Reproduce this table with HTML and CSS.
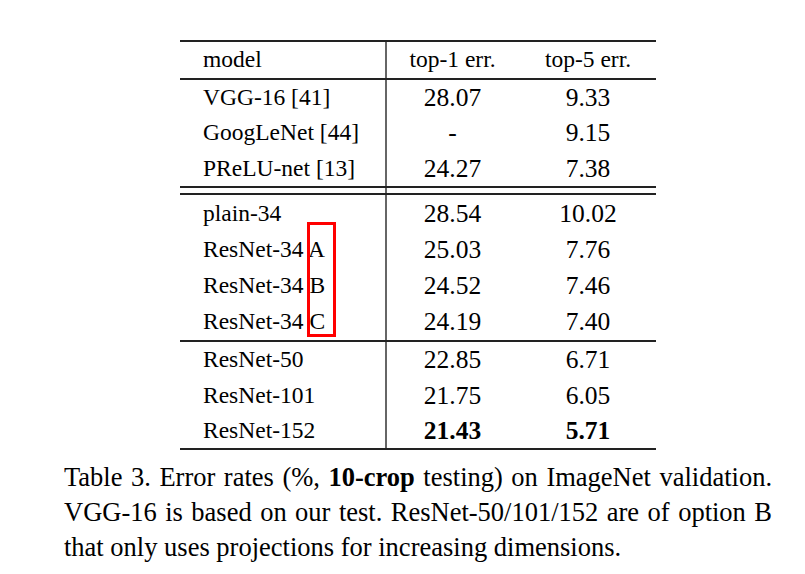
FILE: index.html
```html
<!DOCTYPE html>
<html lang="en">
<head>
    <meta charset="UTF-8">
    <title>Table 3 - Error rates on ImageNet validation</title>
    <link rel="stylesheet" href="styles.css">
</head>
<body>
    <div class="page">
        <div class="results">
            <div class="group head">
                <div class="row">
                    <div class="cell name">model</div>
                    <div class="cell">top-1 err.</div>
                    <div class="cell">top-5 err.</div>
                </div>
            </div>

            <div class="group short before-double">
                <div class="row">
                    <div class="cell name">VGG-16 [41]</div>
                    <div class="cell num">28.07</div>
                    <div class="cell num">9.33</div>
                </div>
                <div class="row">
                    <div class="cell name">GoogLeNet [44]</div>
                    <div class="cell num">-</div>
                    <div class="cell num">9.15</div>
                </div>
                <div class="row">
                    <div class="cell name">PReLU-net [13]</div>
                    <div class="cell num">24.27</div>
                    <div class="cell num">7.38</div>
                </div>
            </div>

            <div class="group double">
                <div class="row">
                    <div class="cell name">plain-34</div>
                    <div class="cell num">28.54</div>
                    <div class="cell num">10.02</div>
                </div>
                <div class="row">
                    <div class="cell name">ResNet-34 A</div>
                    <div class="cell num">25.03</div>
                    <div class="cell num">7.76</div>
                </div>
                <div class="row">
                    <div class="cell name">ResNet-34 B</div>
                    <div class="cell num">24.52</div>
                    <div class="cell num">7.46</div>
                </div>
                <div class="row">
                    <div class="cell name">ResNet-34 C</div>
                    <div class="cell num">24.19</div>
                    <div class="cell num">7.40</div>
                </div>
            </div>

            <div class="group short">
                <div class="row">
                    <div class="cell name">ResNet-50</div>
                    <div class="cell num">22.85</div>
                    <div class="cell num">6.71</div>
                </div>
                <div class="row">
                    <div class="cell name">ResNet-101</div>
                    <div class="cell num">21.75</div>
                    <div class="cell num">6.05</div>
                </div>
                <div class="row">
                    <div class="cell name">ResNet-152</div>
                    <div class="cell num best">21.43</div>
                    <div class="cell num best">5.71</div>
                </div>
            </div>

            <!-- red highlight around the A / B / C options -->
            <div class="highlight"></div>
        </div>

        <p class="caption">
            <span class="line">Table 3. Error rates (%, <b>10-crop</b> testing) on ImageNet validation.</span>
            <span class="line">VGG-16 is based on our test. ResNet-50/101/152 are of option B</span>
            <span class="line last">that only uses projections for increasing dimensions.</span>
        </p>
    </div>
</body>
</html>
```

FILE: styles.css
```css
body {
    margin: 0;
    background-color: #fff;
    color: #000;
    font-family: 'Liberation Serif', 'Times New Roman', serif;
}
.page {
    padding: 40px 0 0 0;
}
.results {
    position: relative;
    width: 476px;
    margin-left: 180px;
    border-top: 2px solid #222;
    border-bottom: 2px solid #222;
    /* the vertical rule after the model column */
    background: linear-gradient(to right, transparent 205px, #666 205px, #666 207px, transparent 207px);
}
.group {
    border-top: 2px solid #222;
}
.group.head {
    border-top: none;
}
.group.before-double {
    border-bottom: 2px solid #222;
}
.group.double {
    margin-top: 5px;
}
.row {
    display: grid;
    grid-template-columns: 205px 135px 136px;
    height: 36px;
    align-items: center;
}
.group.short .row {
    height: 35.4px;
}
.group.double .row {
    height: 36.25px;
}
.cell {
    text-align: center;
    font-size: 23.5px;
    line-height: 1;
    white-space: nowrap;
}
.cell.name {
    text-align: left;
    padding-left: 23px;
}
.cell.num {
    font-size: 25.5px;
}
.best {
    font-weight: bold;
}
.highlight {
    position: absolute;
    left: 127px;
    top: 180px;
    width: 23px;
    height: 109px;
    border: 3px solid #f00;
}
.caption {
    width: 708px;
    margin: 10px 0 0 64px;
    font-size: 26.5px;
    line-height: 35px;
}
.caption .line {
    display: block;
    text-align: justify;
    text-align-last: justify;
}
.caption .line.last {
    text-align-last: left;
}
```
